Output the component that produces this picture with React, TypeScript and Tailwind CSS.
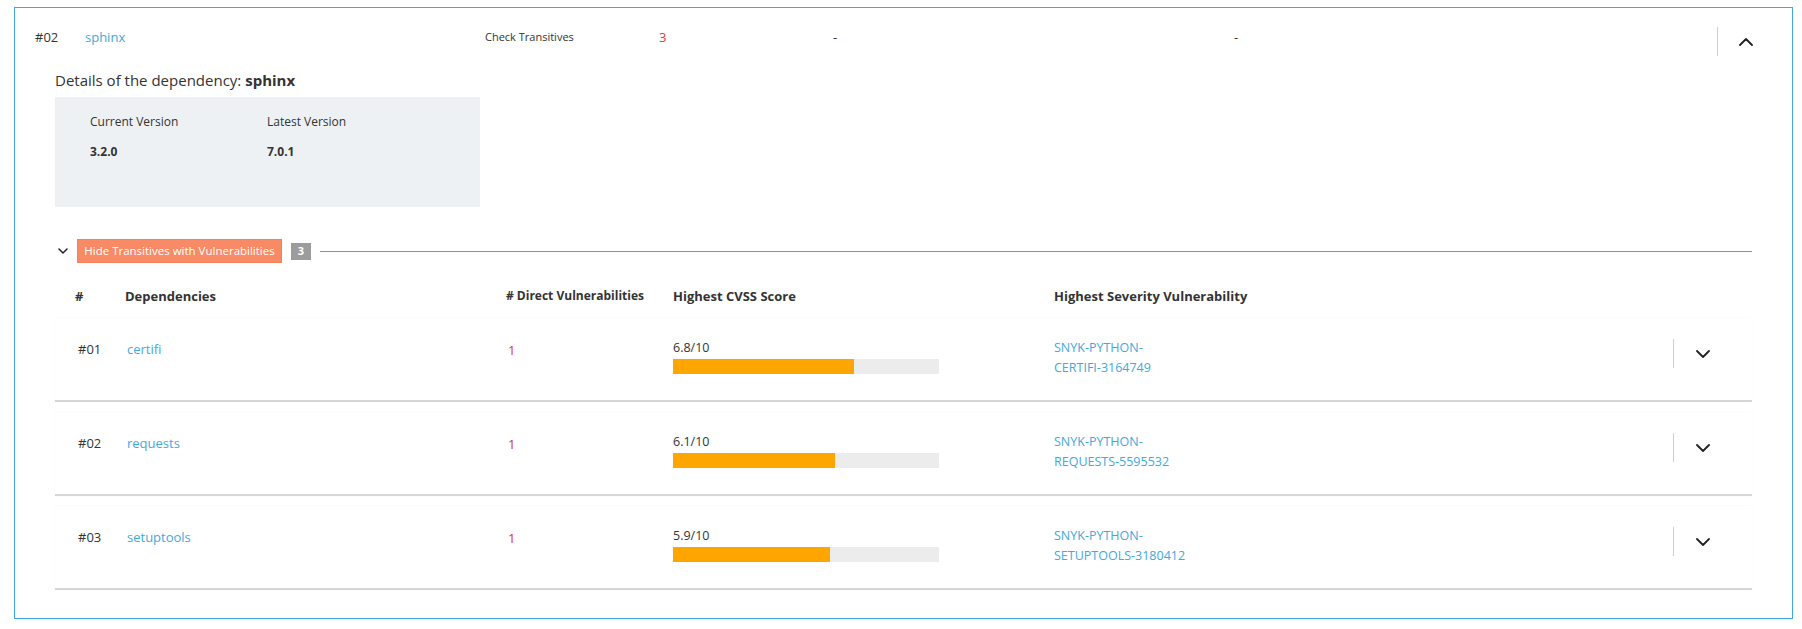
import React from "react";

const rows = [
  { n: "#01", name: "certifi", direct: "1", score: 6.8, id1: "SNYK-PYTHON-", id2: "CERTIFI-3164749" },
  { n: "#02", name: "requests", direct: "1", score: 6.1, id1: "SNYK-PYTHON-", id2: "REQUESTS-5595532" },
  { n: "#03", name: "setuptools", direct: "1", score: 5.9, id1: "SNYK-PYTHON-", id2: "SETUPTOOLS-3180412" },
];

function ChevronDown({ w = 14, h = 8, sw = 1.8 }: { w?: number; h?: number; sw?: number }) {
  return (
    <svg width={w} height={h} viewBox={`0 0 ${w} ${h}`} fill="none">
      <polyline points={`1,1 ${w / 2},${h - 1} ${w - 1},1`} stroke="#222" strokeWidth={sw} strokeLinecap="round" strokeLinejoin="round" />
    </svg>
  );
}

function ChevronUp({ w = 14, h = 8 }: { w?: number; h?: number }) {
  return (
    <svg width={w} height={h} viewBox={`0 0 ${w} ${h}`} fill="none">
      <polyline points={`1,${h - 1} ${w / 2},1 ${w - 1},${h - 1}`} stroke="#222" strokeWidth={1.8} strokeLinecap="round" strokeLinejoin="round" />
    </svg>
  );
}

export default function App() {
  return (
    <div className="w-[1802px] h-[629px] bg-white pt-[7px] pl-[14px]" style={{ fontFamily: '"Open Sans", "Noto Sans", sans-serif' }}>
      <div className="w-[1779px] h-[612px] border border-[#3ea8e3] text-[#333]">
        {/* top row */}
        <div className="flex items-start pt-[19px] pl-[20px] text-[13px]">
          <div className="w-[50px] mt-[1px] leading-[18px]">#02</div>
          <div className="w-[400px] mt-[1px] leading-[18px] text-[#41a9de]">sphinx</div>
          <div className="w-[174px] mt-[1px] leading-[18px] text-[11px]">Check Transitives</div>
          <div className="w-[174px] mt-[1px] leading-[18px] text-[#dd3a3f]">3</div>
          <div className="w-[401px] mt-[1px] leading-[18px]">-</div>
          <div className="flex-1 mt-[1px] leading-[18px]">-</div>
          <div className="w-[1px] h-[29px] bg-[#cfcfcf]" />
          <div className="h-[29px] flex items-center pl-[21px] pr-[39px]">
            <ChevronUp />
          </div>
        </div>

        <div className="mx-[40px]">
          {/* details */}
          <div className="mt-[14px] text-[15px] leading-[20px] text-[#333]">
            Details of the dependency: <span className="font-bold">sphinx</span>
          </div>
          <div className="mt-[7px] w-[425px] h-[110px] bg-[#eef1f4] pt-[17px] pl-[35px] text-[12px]">
            <div className="flex leading-[16px]">
              <div className="w-[177px]">Current Version</div>
              <div>Latest Version</div>
            </div>
            <div className="flex leading-[16px] mt-[14px] font-bold">
              <div className="w-[177px]">3.2.0</div>
              <div>7.0.1</div>
            </div>
          </div>

          {/* toggle */}
          <div className="mt-[32px] flex items-center h-[24px]">
            <div className="ml-[3px] w-[10px] flex items-center">
              <ChevronDown w={10} h={6} sw={1.5} />
            </div>
            <div className="ml-[9px] w-[205px] h-[24px] flex items-center justify-center bg-[#f88a66] border border-[#f3825c] text-white text-[11.5px] leading-none whitespace-nowrap">
              Hide Transitives with Vulnerabilities
            </div>
            <div className="ml-[9px] w-[20px] h-[17px] bg-[#9c9c9c] text-white text-[11px] font-bold flex items-center justify-center">3</div>
            <div className="ml-[9px] flex-1 h-[1px] bg-[#8f8f8f]" />
          </div>

          {/* header */}
          <div className="mt-[24px] flex text-[13px] font-bold leading-[18px] text-[#333] pl-[20px]">
            <div className="w-[50px]">#</div>
            <div className="w-[381px]">Dependencies</div>
            <div className="w-[167px] text-[12px]"># Direct Vulnerabilities</div>
            <div className="w-[381px]">Highest CVSS Score</div>
            <div>Highest Severity Vulnerability</div>
          </div>

          {/* rows */}
          <div className="mt-[13px] flex flex-col gap-[10px]">
            {rows.map((r) => (
              <div key={r.n} className="h-[84px] bg-white border-b-2 border-[#d6d6d6] shadow-[0_0_2px_rgba(0,0,0,0.04)] flex items-start pt-[20px] pl-[23px] text-[13px]">
                <div className="w-[49px] mt-[2px] leading-[18px]">{r.n}</div>
                <div className="w-[381px] mt-[2px] leading-[18px] text-[#41a9de]">{r.name}</div>
                <div className="w-[165px] mt-[3px] leading-[18px] text-[#d8333a]">{r.direct}</div>
                <div className="w-[381px] mt-[1px]">
                  <div className="leading-[18px] text-[12.5px]">{r.score}/10</div>
                  <div className="mt-[2px] w-[266px] h-[15px] bg-[#ececec]">
                    <div className="h-full bg-[#ffa500]" style={{ width: `${r.score * 10}%` }} />
                  </div>
                </div>
                <div className="w-[619px] leading-[20px] text-[12.5px] text-[#41a9de]">
                  <div>{r.id1}</div>
                  <div>{r.id2}</div>
                </div>
                <div className="w-[1px] h-[29px] mt-[1px] bg-[#cfcfcf]" />
                <div className="h-[29px] mt-[1px] flex items-center pl-[22px]">
                  <ChevronDown />
                </div>
              </div>
            ))}
          </div>
        </div>
      </div>
    </div>
  );
}
